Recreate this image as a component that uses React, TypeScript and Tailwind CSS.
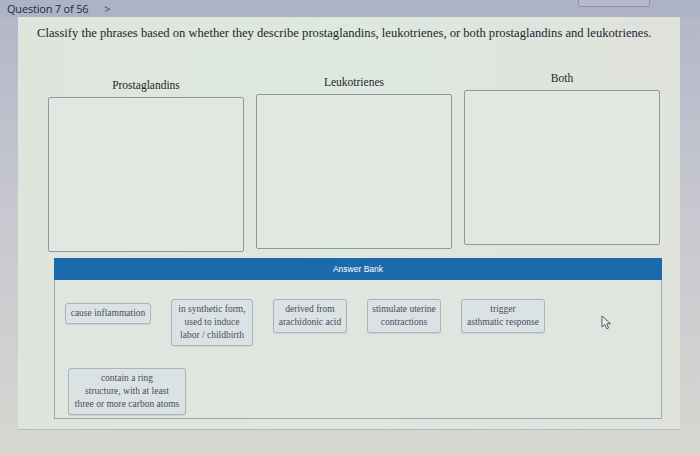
import React from "react";

const serif = { fontFamily: '"Liberation Serif", "Times New Roman", serif' };

function Chip({ w, lines }: { w: number; lines: string[] }) {
  return (
    <div
      className="shrink-0 whitespace-nowrap rounded-[3px] border border-[#aab4bd] bg-[#dbe2e4] px-[2px] py-[3px] text-center text-[9.5px] leading-[13px] text-[#4a4d58] shadow-[0_1px_1px_rgba(0,0,0,0.08)]"
      style={{ ...serif, width: w }}
    >
      {lines.map((l, i) => (
        <div key={i}>{l}</div>
      ))}
    </div>
  );
}

export default function App() {
  return (
    <div className="flex h-[454px] w-[700px] flex-col overflow-hidden bg-gradient-to-b from-[#b3b6c8] via-[#c8c9d0] to-[#d6d6d1]">
      {/* top bar */}
      <div className="relative flex h-[17px] shrink-0 items-center bg-[#adb2c5] pl-[7px] text-[11px] text-[#1f2a4a]" style={{ fontFamily: '"Open Sans", "Liberation Sans", sans-serif' }}>
        <span className="leading-none tracking-[-0.2px]">Question 7 of 56</span>
        <span className="ml-[16px] text-[11px] leading-none text-[#3a4565]">&gt;</span>
        <div className="absolute left-[578px] top-[-8px] h-[15px] w-[72px] rounded-[3px] border border-[#8d93a8] bg-[#b5b9cb]" />
      </div>
      <div className="flex flex-1">
        <div className="w-[18px] shrink-0" />
        {/* panel */}
        <div className="flex h-[413px] w-[662px] shrink-0 flex-col border-b border-[#b9bcbf] bg-gradient-to-r from-[#dfe5dc] via-[#dde8df] to-[#e0e2dc]">
          <div className="pl-[19px] pt-[8px] text-[12.6px] leading-[16px] text-[#25242c]" style={serif}>
            Classify the phrases based on whether they describe prostaglandins, leukotrienes, or both prostaglandins and leukotrienes.
          </div>
          {/* columns */}
          <div className="ml-[30px] mr-[20px] mt-[31px] grid grid-cols-3 gap-[12px]">
            {[
              ["Prostaglandins", "mt-[6px]"],
              ["Leukotrienes", "mt-[3px]"],
              ["Both", "mt-[-1px]"],
            ].map(([label, m]) => (
              <div key={label} className="flex flex-col items-center">
                <div className={`${m} text-[11.5px] leading-[14px] text-[#25242c]`} style={serif}>
                  {label}
                </div>
                <div className="mt-[5px] h-[155px] w-full rounded-[2px] border border-[#8f96a6] bg-[#e1e8e1]" />
              </div>
            ))}
          </div>
          {/* answer bank */}
          <div className="ml-[36px] mr-[18px] mt-[6px] flex flex-col">
            <div className="flex h-[22px] items-center justify-center bg-[#1c6aab] text-[8.5px] text-white" style={{ fontFamily: '"Liberation Sans", Arial, sans-serif' }}>
              Answer Bank
            </div>
            <div className="relative h-[139px] border border-t-0 border-[#9ea5b3] bg-[#dfe5df] pl-[10px] pt-[19px]">
              <div className="flex items-start gap-[20px]">
                <div className="mt-[4px]">
                  <Chip w={86} lines={["cause inflammation"]} />
                </div>
                <Chip w={82} lines={["in synthetic form,", "used to induce", "labor / childbirth"]} />
                <Chip w={74} lines={["derived from", "arachidonic acid"]} />
                <Chip w={74} lines={["stimulate uterine", "contractions"]} />
                <Chip w={84} lines={["trigger", "asthmatic response"]} />
              </div>
              <div className="ml-[3px] mt-[22px] flex">
                <Chip w={118} lines={["contain a ring", "structure, with at least", "three or more carbon atoms"]} />
              </div>
              <svg className="absolute left-[546px] top-[35px]" width="11" height="15" viewBox="0 0 11 15">
                <path d="M1 1 L1 12 L3.8 9.5 L5.8 13.8 L7.6 13 L5.7 8.8 L9.5 8.6 Z" fill="#eef0ee" stroke="#555a63" strokeWidth="1" strokeLinejoin="round" />
              </svg>
            </div>
          </div>
        </div>
        <div className="flex-1" />
      </div>
    </div>
  );
}
